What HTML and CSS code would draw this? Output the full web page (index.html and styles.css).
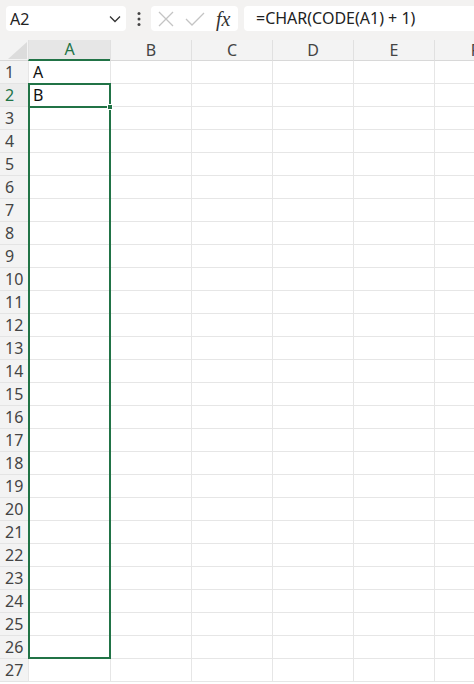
FILE: index.html
```html
<!DOCTYPE html>
<html>
<head>
<meta charset="utf-8">
<link rel="stylesheet" href="styles.css">
</head>
<body>
<div class="app">
  <div class="toolbar">
    <div class="namebox">
      <span class="name">A2</span>
      <svg class="chev" width="12" height="8" viewBox="0 0 12 8"><path d="M1 1.5 L6 6.5 L11 1.5" fill="none" stroke="#333" stroke-width="1.3"/></svg>
    </div>
    <div class="more">
      <svg width="4" height="16" viewBox="0 0 4 16"><circle cx="2" cy="2.5" r="1.5" fill="#444"/><circle cx="2" cy="8" r="1.5" fill="#444"/><circle cx="2" cy="13.5" r="1.5" fill="#444"/></svg>
    </div>
    <div class="fxbox">
      <svg class="ic" width="16" height="16" viewBox="0 0 16 16"><path d="M1 1 L15 15 M15 1 L1 15" stroke="#c4c4c4" stroke-width="1.3" fill="none"/></svg>
      <svg class="ic" width="20" height="16" viewBox="0 0 20 16"><path d="M1 8 L7 14 L19 2" stroke="#c4c4c4" stroke-width="1.3" fill="none"/></svg>
      <span class="fx">fx</span>
    </div>
    <div class="formula">=CHAR(CODE(A1) + 1)</div>
  </div>
  <div class="sheet">
    <div class="grid" id="grid">
      <div class="corner"><div class="tri"></div></div>
      <div class="ch sel">A</div>
      <div class="ch">B</div>
      <div class="ch">C</div>
      <div class="ch">D</div>
      <div class="ch">E</div>
      <div class="ch">F</div>
    </div>
    <div class="range"></div>
    <div class="active"><div class="handle"></div></div>
  </div>
</div>
<script>
  var g = document.getElementById('grid');
  var html = '';
  for (var r = 1; r <= 27; r++) {
    html += '<div class="rh' + (r === 2 ? ' rsel' : '') + '">' + r + '</div>';
    for (var c = 0; c < 6; c++) {
      var t = '';
      if (c === 0 && r === 1) t = 'A';
      if (c === 0 && r === 2) t = 'B';
      html += '<div class="cell">' + t + '</div>';
    }
  }
  g.insertAdjacentHTML('beforeend', html);
</script>
</body>
</html>
```
FILE: styles.css
```css
* { box-sizing: border-box; }
html, body {
  margin: 0;
  padding: 0;
  width: 474px;
  height: 684px;
  overflow: hidden;
  background: #fff;
  font-family: "Noto Sans", "Open Sans", sans-serif;
  color: #222;
}
.app { width: 474px; height: 684px; overflow: hidden; }

.toolbar {
  height: 40px;
  background: #f3f2f1;
  display: flex;
  align-items: flex-start;
  padding-top: 6px;
  padding-left: 6px;
  white-space: nowrap;
}
.namebox {
  width: 120px;
  height: 25px;
  background: #fff;
  border-radius: 4px;
  display: flex;
  align-items: center;
  justify-content: space-between;
  padding: 0 5px 0 4px;
  flex: none;
}
.name { font-size: 16px; color: #222; }
.chev { margin-top: 1px; }
.more {
  width: 25px;
  height: 25px;
  display: flex;
  align-items: center;
  justify-content: center;
  flex: none;
}
.fxbox {
  width: 87px;
  height: 25px;
  background: #fff;
  border-radius: 4px;
  display: flex;
  align-items: center;
  padding-left: 7px;
  gap: 11px;
  flex: none;
}
.fx {
  font-family: "Liberation Serif", "DejaVu Serif", serif;
  font-style: italic;
  font-size: 20px;
  color: #333;
  line-height: 1;
}
.formula {
  margin-left: 6px;
  flex: none;
  width: 260px;
  height: 25px;
  background: #fff;
  border-radius: 4px;
  font-size: 16px;
  line-height: 25px;
  padding-left: 12px;
  color: #222;
}

.sheet { position: relative; }
.grid {
  display: grid;
  grid-template-columns: 28px 82px 81px 81px 81px 81px 81px;
  grid-template-rows: 21px;
  grid-auto-rows: 23px;
}
.corner {
  background: #f3f3f3;
  border-bottom: 1px solid #d8d8d8;
  position: relative;
}
.tri {
  position: absolute;
  right: 1px;
  bottom: 1px;
  width: 0;
  height: 0;
  border-left: 19px solid transparent;
  border-bottom: 17px solid #dcdcdc;
}
.ch {
  background: #f3f3f3;
  border-left: 1px solid #e0e0e0;
  border-bottom: 1px solid #d8d8d8;
  font-size: 16px;
  color: #444;
  text-align: center;
  line-height: 20px;
}
.ch.sel {
  background: #e6e6e6;
  color: #217346;
  border-bottom: 2px solid #217346;
  line-height: 19px;
}
.rh {
  background: #f3f3f3;
  border-bottom: 1px solid #e4e4e4;
  font-size: 16px;
  color: #444;
  padding-left: 5px;
  line-height: 23px;
}
.rh.rsel { color: #217346; background: #ececec; }
.cell {
  border-left: 1px solid #e6e6e6;
  border-bottom: 1px solid #e6e6e6;
  font-size: 16px;
  color: #111;
  padding-left: 4px;
  line-height: 23px;
}
.range {
  position: absolute;
  left: 28px;
  top: 43px;
  width: 83px;
  height: 576px;
  border: 2px solid #217346;
}
.active {
  position: absolute;
  left: 28px;
  top: 43px;
  width: 83px;
  height: 25px;
  border: 2px solid #217346;
}
.handle {
  position: absolute;
  right: -4px;
  bottom: -4px;
  width: 6px;
  height: 6px;
  background: #217346;
  border: 1px solid #fff;
}
```
